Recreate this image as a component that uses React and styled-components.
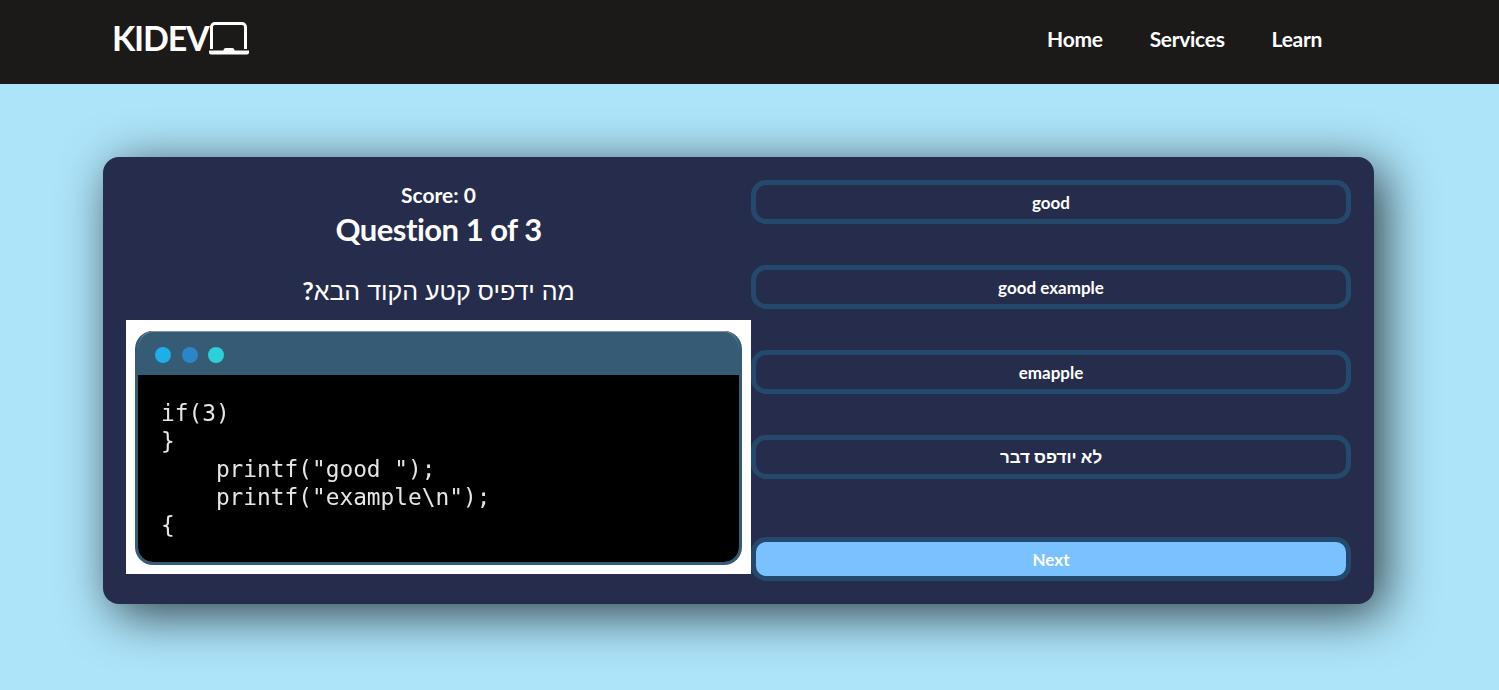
import React from 'react';
import styled, { createGlobalStyle } from 'styled-components';

const GlobalStyle = createGlobalStyle`
  html, body {
    margin: 0;
    padding: 0;
    height: 100%;
    overflow: hidden;
    background-color: #ade4f9;
  }
  body {
    font-family: Lato, "Liberation Sans", sans-serif;
    color: #fff;
  }
`;

const Navbar = styled.header`
  box-sizing: border-box;
  height: 84px;
  background-color: #1b1a19;
  display: flex;
  align-items: center;
  justify-content: space-between;
  padding: 0 177px 8px 112px;
`;

const Logo = styled.div`
  display: flex;
  align-items: center;
  font-size: 34px;
  font-weight: 700;
  letter-spacing: -1.2px;
  line-height: 1;
`;

const NavLinks = styled.nav`
  display: flex;
  gap: 47px;
`;

const NavLink = styled.a`
  color: #fff;
  font-size: 21px;
  font-weight: 700;
  letter-spacing: -0.3px;
  text-decoration: none;
`;

const Main = styled.main`
  padding: 73px 0 0 103px;
`;

const Card = styled.section`
  box-sizing: border-box;
  width: 1271px;
  height: 447px;
  padding: 23px;
  display: flex;
  background-color: #262d4c;
  border-radius: 16px;
  box-shadow: 10px 10px 50px rgba(0, 0, 0, 0.72);
`;

const LeftColumn = styled.div`
  width: 625px;
  display: flex;
  flex-direction: column;
  align-items: center;
`;

const Score = styled.div`
  margin-top: 2px;
  height: 25px;
  line-height: 25px;
  font-size: 21px;
  font-weight: 700;
`;

const QuestionCount = styled.h2`
  margin: 0;
  height: 45px;
  line-height: 45px;
  font-size: 31px;
  font-weight: 700;
  letter-spacing: -0.5px;
`;

const QuestionText = styled.p`
  margin: 20px 0 0;
  height: 48px;
  line-height: 36px;
  font-size: 25px;
  direction: rtl;
  font-family: "Liberation Sans", sans-serif;
`;

const QuestionMark = styled.span`
  font-family: Lato, sans-serif;
  font-weight: 700;
`;

const CodePicture = styled.div`
  box-sizing: border-box;
  align-self: stretch;
  height: 254px;
  padding: 11px 9px 9px;
  background-color: #fff;
`;

const CodeWindow = styled.div`
  height: 100%;
  box-sizing: border-box;
  display: flex;
  flex-direction: column;
  border: 3px solid #365b75;
  border-top-width: 0;
  border-radius: 18px;
  background-color: #365b75;
  box-shadow: inset 0 1px 0 #7f96a6;
  overflow: hidden;
`;

const TitleBar = styled.div`
  height: 44px;
  flex: none;
  box-sizing: border-box;
  display: flex;
  align-items: center;
  gap: 10.5px;
  padding: 4px 0 0 17px;
`;

const Dot = styled.span`
  width: 16px;
  height: 16px;
  border-radius: 50%;
  background-color: ${(p) => p.$color};
`;

const CodeBody = styled.pre`
  flex: 1;
  margin: 0;
  padding: 24px 0 0 23px;
  background-color: #000;
  border-radius: 0 0 15px 15px;
  color: #e6e6e6;
  font-family: "DejaVu Sans Mono", monospace;
  font-size: 22.8px;
  line-height: 28px;
  filter: blur(0.35px);
`;

const RightColumn = styled.div`
  width: 600px;
  display: flex;
  flex-direction: column;
`;

const Answer = styled.button`
  box-sizing: border-box;
  width: 600px;
  height: 44px;
  margin-bottom: 41px;
  flex: none;
  border: 5px solid #24496d;
  border-radius: 15px;
  background-color: transparent;
  color: #fff;
  font-family: Lato, "Liberation Sans", sans-serif;
  font-size: 17px;
  font-weight: 700;
`;

const NextButton = styled(Answer)`
  margin: 17px 0 0;
  background-color: #79c2ff;
`;

const LaptopIcon = () => (
  <svg width="42" height="33" viewBox="0 0 42 33" fill="none">
    <path d="M3.5 27V5a3.5 3.5 0 0 1 3.5-3.5h27a3.5 3.5 0 0 1 3.5 3.5v22" stroke="#fff" strokeWidth="3" />
    <path
      d="M1 28.5h14.5c0-1.6.8-2.5 2.2-2.5h6.6c1.4 0 2.2.9 2.2 2.5H41v2a2 2 0 0 1-2 2H3a2 2 0 0 1-2-2z"
      fill="#fff"
    />
  </svg>
);

const answers = ['good', 'good example', 'emapple', 'לא יודפס דבר'];

const code = `if(3)
}
    printf("good ");
    printf("example\\n");
{`;

export default function App() {
  return (
    <>
      <GlobalStyle />
      <Navbar>
        <Logo>
          KIDEV
          <LaptopIcon />
        </Logo>
        <NavLinks>
          <NavLink href="#">Home</NavLink>
          <NavLink href="#">Services</NavLink>
          <NavLink href="#">Learn</NavLink>
        </NavLinks>
      </Navbar>
      <Main>
        <Card>
          <LeftColumn>
            <Score>Score: 0</Score>
            <QuestionCount>Question 1 of 3</QuestionCount>
            <QuestionText>
              מה ידפיס קטע הקוד הבא<QuestionMark>?</QuestionMark>
            </QuestionText>
            <CodePicture>
              <CodeWindow>
                <TitleBar>
                  <Dot $color="#1eaee8" />
                  <Dot $color="#2a86c8" />
                  <Dot $color="#2bd0d8" />
                </TitleBar>
                <CodeBody>{code}</CodeBody>
              </CodeWindow>
            </CodePicture>
          </LeftColumn>
          <RightColumn>
            {answers.map((a) => (
              <Answer key={a}>{a}</Answer>
            ))}
            <NextButton>Next</NextButton>
          </RightColumn>
        </Card>
      </Main>
    </>
  );
}
